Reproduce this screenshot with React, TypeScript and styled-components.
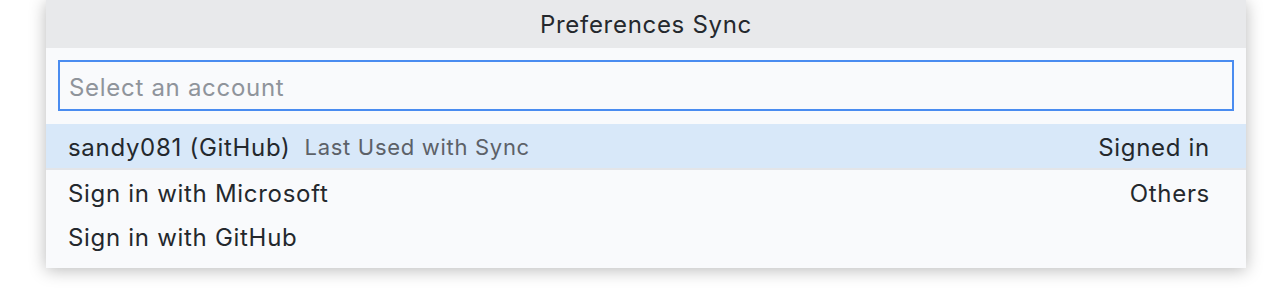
import React from 'react';
import styled, { createGlobalStyle } from 'styled-components';

const Global = createGlobalStyle`
  body {
    margin: 0;
    background: #ffffff;
    font-family: Inter, "Noto Sans", sans-serif;
    letter-spacing: 0.7px;
  }
`;

const Page = styled.div`
  height: 298px;
  padding: 0 30px 0 46px;
  box-sizing: border-box;
`;

const Widget = styled.div`
  width: 1200px;
  background: #f9fafc;
  box-shadow: 0 2px 16px rgba(0, 0, 0, 0.28);
  padding-bottom: 10px;
`;

const Title = styled.div`
  height: 48px;
  background: #e8e9eb;
  color: #24282d;
  font-size: 24px;
  display: flex;
  align-items: center;
  justify-content: center;
`;

const InputWrap = styled.div`
  padding: 12px 12px 13px;
`;

const Input = styled.input`
  display: block;
  width: 100%;
  box-sizing: border-box;
  height: 51px;
  border: 2px solid #4a8cf0;
  background: #f9fafc;
  font-family: inherit;
  letter-spacing: inherit;
  font-size: 24px;
  padding: 3px 9px 0;
  color: #24282d;
  outline: none;
  &::placeholder {
    color: #8f949b;
  }
`;

// rows are 44px tall; the selected one adds a 2px divider below
const Row = styled.div<{ $selected?: boolean }>`
  height: 42px;
  padding: 2px 36px 0 22px;
  display: flex;
  align-items: center;
  font-size: 24px;
  color: #24282d;
  background: ${(p) => (p.$selected ? '#d8e8f9' : 'transparent')};
  border-bottom: ${(p) => (p.$selected ? '2px solid #e3e5e9' : 'none')};
`;

const Label = styled.span`
  white-space: nowrap;
`;

const Description = styled.span`
  margin-left: 14px;
  font-size: 22px;
  color: #5c6168;
`;

const Detail = styled.span`
  margin-left: auto;
`;

export default function App() {
  return (
    <Page>
      <Global />
      <Widget>
        <Title>Preferences Sync</Title>
        <InputWrap>
          <Input placeholder="Select an account" />
        </InputWrap>
        <Row $selected>
          <Label>sandy081 (GitHub)</Label>
          <Description>Last Used with Sync</Description>
          <Detail>Signed in</Detail>
        </Row>
        <Row>
          <Label>Sign in with Microsoft</Label>
          <Detail>Others</Detail>
        </Row>
        <Row>
          <Label>Sign in with GitHub</Label>
        </Row>
      </Widget>
    </Page>
  );
}
